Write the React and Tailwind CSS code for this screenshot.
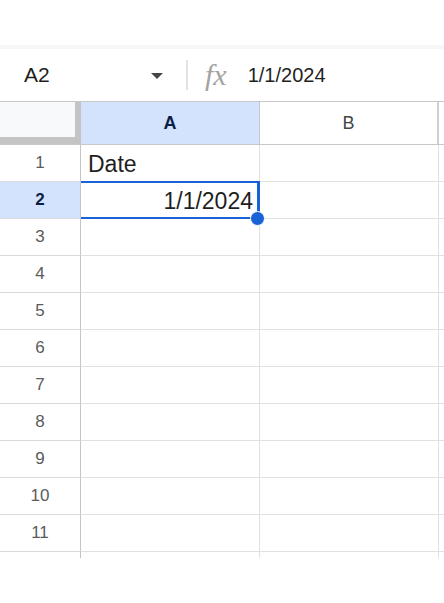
import React from 'react';

const rows = [1, 2, 3, 4, 5, 6, 7, 8, 9, 10, 11];

const Caret = () => (
    <svg width="12" height="6" viewBox="0 0 12 6" className="text-[#444746]">
        <path d="M0 0h12L6 6z" fill="currentColor" />
    </svg>
);

const Row = ({ n }) => {
    const selected = n === 2;
    return (
        <div className="flex h-[37px]">
            <div
                className={`w-[81px] shrink-0 flex items-center justify-center border-r border-r-[#c4c4c4] border-b border-b-[#dadada] text-[17px] ${
                    selected ? 'bg-[#d3e3fd] text-[#0b1f47] font-bold' : 'bg-white text-[#5b5b5b]'
                }`}
            >
                {n}
            </div>
            <div
                className={`relative w-[179px] shrink-0 flex items-center pt-[2px] text-[23px] text-[#1f1f1f] ${
                    selected
                        ? 'justify-end pr-[4px] border-t-2 border-b-2 border-r-[3px] border-[#1a63d6] -mt-[1px] h-[38px]'
                        : 'border-r border-b border-[#e1e1e1] px-[7px]'
                }`}
            >
                {n === 1 && 'Date'}
                {selected && '1/1/2024'}
                {selected && (
                    <span className="absolute -right-[8px] -bottom-[9px] w-[15px] h-[15px] rounded-full bg-[#1a63d6] border border-white z-10" />
                )}
            </div>
            <div className="w-[179px] shrink-0 border-r border-b border-[#e1e1e1]" />
            <div className="flex-1 border-b border-[#e1e1e1]" />
        </div>
    );
};

const App = () => {
    return (
        <div className="w-[444px] h-[603px] bg-white overflow-hidden font-['Liberation_Sans',Arial,sans-serif]">
            <div className="h-[45px]" />
            <div className="h-[4px] bg-[#f7f7f7]" />

            {/* formula bar */}
            <div className="h-[53px] flex items-center border-b border-[#c7c7c7]">
                <div className="w-[136px] pl-[24px] text-[21px] text-[#1f1f1f]">A2</div>
                <div className="w-[42px] flex justify-center pt-[1px]">
                    <Caret />
                </div>
                <div className="w-[2px] h-[30px] bg-[#e3e3e3] ml-[8px]" />
                <div className="ml-[17px] text-[30px] italic text-[#a3a3a3] font-['Liberation_Serif',serif] leading-none">
                    fx
                </div>
                <div className="ml-[21px] text-[20px] text-[#1f1f1f]">1/1/2024</div>
            </div>

            {/* column headers */}
            <div className="flex h-[43px] border-b border-[#c7c7c7]">
                <div className="w-[81px] shrink-0 bg-[#f8f9fa] border-r-[6px] border-b-[7px] border-[#c4c4c4]" />
                <div className="w-[179px] shrink-0 flex items-center justify-center bg-[#d3e3fd] border-r border-[#c7c7c7] text-[18px] font-bold text-[#0b1f47]">
                    A
                </div>
                <div className="w-[179px] shrink-0 flex items-center justify-center border-r-2 border-[#d0d0d0] text-[18px] text-[#444746]">
                    B
                </div>
                <div className="flex-1" />
            </div>

            {rows.map((n) => (
                <Row key={n} n={n} />
            ))}

            <div className="flex h-[6px]">
                <div className="w-[81px] border-r border-[#c4c4c4]" />
                <div className="w-[179px] border-r border-[#e1e1e1]" />
                <div className="w-[179px] border-r border-[#e1e1e1]" />
            </div>
        </div>
    );
};

export default App;
